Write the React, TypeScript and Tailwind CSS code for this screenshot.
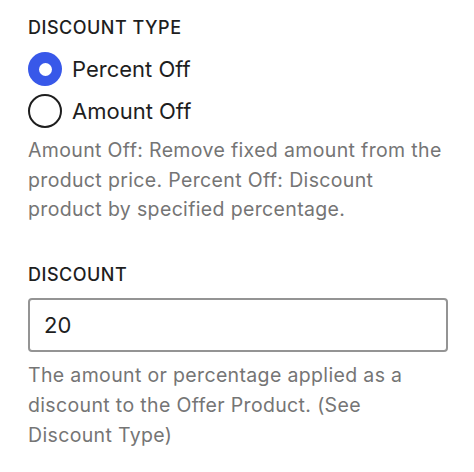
import React, { useState } from "react";

type Option = { value: string; label: string };

const options: Option[] = [
  { value: "percent", label: "Percent Off" },
  { value: "amount", label: "Amount Off" },
];

const font = { fontFamily: "Inter, 'Noto Sans', sans-serif" };

export default function App() {
  const [type, setType] = useState("percent");
  const [discount, setDiscount] = useState("20");

  return (
    <div className="min-h-screen bg-white px-[28px] pt-[18px] text-[#1e1e1e]" style={font}>
      {/* Discount type */}
      <div className="text-[18px] font-medium uppercase leading-[20px] tracking-[0.5px]">Discount Type</div>
      <div className="mt-[14px] flex flex-col gap-[8px]">
        {options.map((o) => {
          const checked = type === o.value;
          return (
            <label key={o.value} className="flex cursor-pointer items-center gap-[10px]">
              <span
                className={
                  checked
                    ? "flex h-[34px] w-[34px] items-center justify-center rounded-full bg-[#3858e9]"
                    : "flex h-[34px] w-[34px] items-center justify-center rounded-full border-2 border-[#1e1e1e] bg-white"
                }
                onClick={() => setType(o.value)}
              >
                {checked && <span className="h-[13px] w-[13px] rounded-full bg-white" />}
              </span>
              <span className="text-[22px] leading-[26px]">{o.label}</span>
            </label>
          );
        })}
      </div>
      <p className="mt-[8px] text-[19.5px] leading-[29.5px] tracking-[0.35px] text-[#757575]">
        Amount Off: Remove fixed amount from the product price. Percent Off: Discount product by specified percentage.
      </p>

      {/* Discount */}
      <div className="mt-[40px] text-[18px] font-medium uppercase leading-[20px] tracking-[0.5px]">Discount</div>
      <input
        className="mt-[13px] block h-[54px] w-[420px] rounded-[4px] border-2 border-[#949494] px-[14px] text-[22px] text-[#1e1e1e] outline-none"
        style={font}
        value={discount}
        onChange={(e) => setDiscount(e.target.value)}
      />
      <p className="mt-[8px] text-[19.5px] leading-[30px] tracking-[0.35px] text-[#757575]">
        The amount or percentage applied as a discount to the Offer Product. (See Discount Type)
      </p>
    </div>
  );
}
